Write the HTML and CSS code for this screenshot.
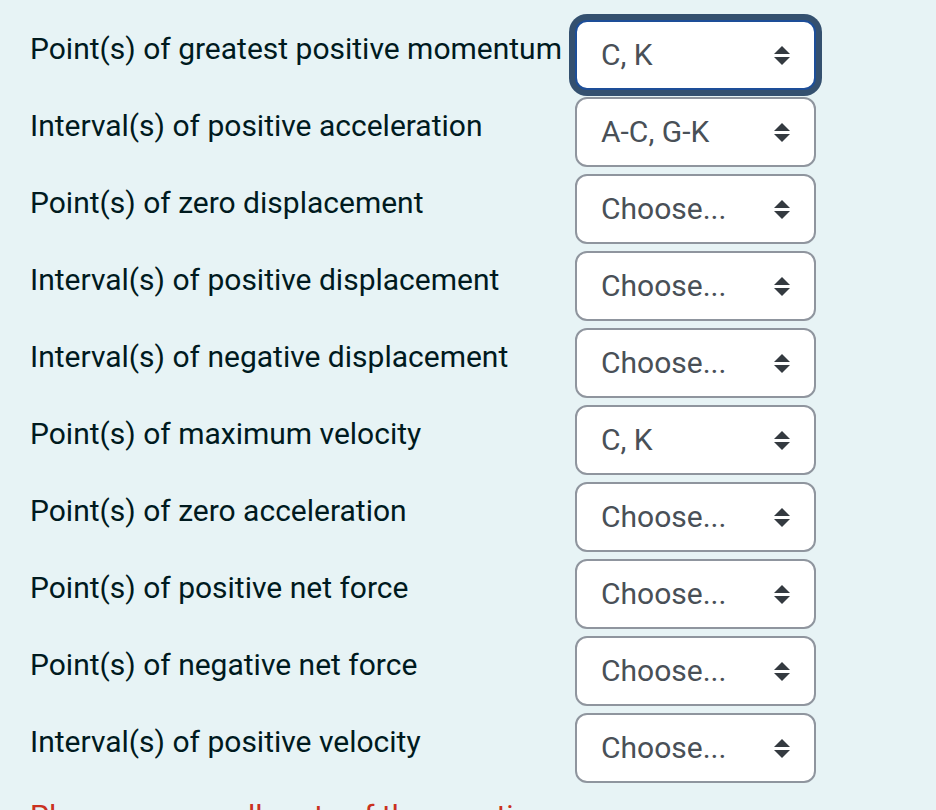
FILE: index.html
```html
<!DOCTYPE html>
<html lang="en">
<head>
<meta charset="utf-8">
<title>Match question</title>
<link rel="stylesheet" href="styles.css">
</head>
<body>
<div class="formulation">
  <div class="matches">
    <div class="label">Point(s) of greatest positive momentum</div>
    <div class="select focused"><span class="value">C, K</span><svg class="chev" viewBox="0 0 16 19" width="16" height="19"><path d="M8 0 L16 8 L0 8 Z M0 11 L16 11 L8 19 Z" fill="#343a40"/></svg></div>

    <div class="label">Interval(s) of positive acceleration</div>
    <div class="select"><span class="value">A-C, G-K</span><svg class="chev" viewBox="0 0 16 19" width="16" height="19"><path d="M8 0 L16 8 L0 8 Z M0 11 L16 11 L8 19 Z" fill="#343a40"/></svg></div>

    <div class="label">Point(s) of zero displacement</div>
    <div class="select"><span class="value">Choose...</span><svg class="chev" viewBox="0 0 16 19" width="16" height="19"><path d="M8 0 L16 8 L0 8 Z M0 11 L16 11 L8 19 Z" fill="#343a40"/></svg></div>

    <div class="label">Interval(s) of positive displacement</div>
    <div class="select"><span class="value">Choose...</span><svg class="chev" viewBox="0 0 16 19" width="16" height="19"><path d="M8 0 L16 8 L0 8 Z M0 11 L16 11 L8 19 Z" fill="#343a40"/></svg></div>

    <div class="label">Interval(s) of negative displacement</div>
    <div class="select"><span class="value">Choose...</span><svg class="chev" viewBox="0 0 16 19" width="16" height="19"><path d="M8 0 L16 8 L0 8 Z M0 11 L16 11 L8 19 Z" fill="#343a40"/></svg></div>

    <div class="label">Point(s) of maximum velocity</div>
    <div class="select"><span class="value">C, K</span><svg class="chev" viewBox="0 0 16 19" width="16" height="19"><path d="M8 0 L16 8 L0 8 Z M0 11 L16 11 L8 19 Z" fill="#343a40"/></svg></div>

    <div class="label">Point(s) of zero acceleration</div>
    <div class="select"><span class="value">Choose...</span><svg class="chev" viewBox="0 0 16 19" width="16" height="19"><path d="M8 0 L16 8 L0 8 Z M0 11 L16 11 L8 19 Z" fill="#343a40"/></svg></div>

    <div class="label">Point(s) of positive net force</div>
    <div class="select"><span class="value">Choose...</span><svg class="chev" viewBox="0 0 16 19" width="16" height="19"><path d="M8 0 L16 8 L0 8 Z M0 11 L16 11 L8 19 Z" fill="#343a40"/></svg></div>

    <div class="label">Point(s) of negative net force</div>
    <div class="select"><span class="value">Choose...</span><svg class="chev" viewBox="0 0 16 19" width="16" height="19"><path d="M8 0 L16 8 L0 8 Z M0 11 L16 11 L8 19 Z" fill="#343a40"/></svg></div>

    <div class="label">Interval(s) of positive velocity</div>
    <div class="select"><span class="value">Choose...</span><svg class="chev" viewBox="0 0 16 19" width="16" height="19"><path d="M8 0 L16 8 L0 8 Z M0 11 L16 11 L8 19 Z" fill="#343a40"/></svg></div>
  </div>
  <div class="validationerror">Please answer all parts of the question.</div>
</div>
</body>
</html>
```
FILE: styles.css
```css
html, body {
  margin: 0;
  padding: 0;
  background: #e7f3f5;
}

body {
  font-family: Roboto, "Noto Sans", "Liberation Sans", sans-serif;
  color: #001a1e;
  width: 936px;
  height: 810px;
  overflow: hidden;
}

.formulation {
  padding: 20px 0 0 30px;
}

.matches {
  display: grid;
  grid-template-columns: 545px 241px;
  row-gap: 7px;
  align-items: start;
}

.label {
  font-size: 30px;
  line-height: 45px;
  margin-top: 6px;
  white-space: nowrap;
  color: #001a1e;
}

.select {
  box-sizing: border-box;
  height: 70px;
  border: 2px solid #8f959e;
  border-radius: 12px;
  background: #fff;
  display: flex;
  align-items: center;
  justify-content: space-between;
  padding: 0 24px 0 24px;
  font-size: 30px;
  color: #495057;
}

.select.focused {
  border-color: #1d4e98;
  box-shadow: 0 0 0 6px #34506f;
}

.value {
  line-height: 1;
  white-space: nowrap;
}

.chev {
  display: block;
  flex: none;
  margin-right: 0;
}

.validationerror {
  margin-top: 10px;
  font-size: 30px;
  line-height: 45px;
  color: #ca3120;
}
```
